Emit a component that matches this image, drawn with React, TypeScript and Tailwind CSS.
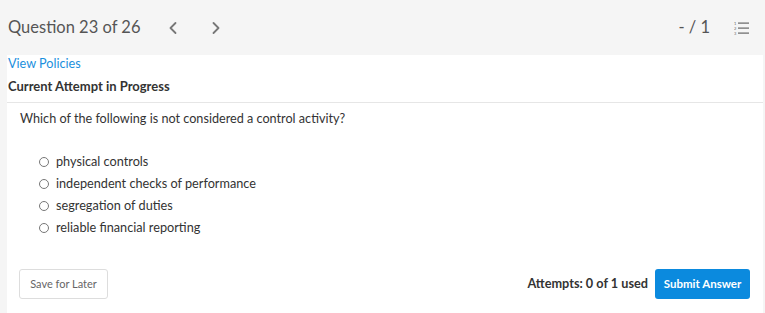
import { ChevronLeft, ChevronRight } from 'lucide-react'

const options = [
  'physical controls',
  'independent checks of performance',
  'segregation of duties',
  'reliable financial reporting',
]

const ListIcon = () => (
  <svg width="16" height="14" viewBox="0 0 16 14" className="text-[#666]">
    <text x="0" y="3.5" fontSize="4" fill="currentColor" fontFamily="Lato, sans-serif">1</text>
    <text x="0" y="8.5" fontSize="4" fill="currentColor" fontFamily="Lato, sans-serif">2</text>
    <text x="0" y="13.5" fontSize="4" fill="currentColor" fontFamily="Lato, sans-serif">3</text>
    <rect x="4" y="1.5" width="11" height="1.2" fill="currentColor" />
    <rect x="4" y="6.5" width="11" height="1.2" fill="currentColor" />
    <rect x="4" y="11.5" width="11" height="1.2" fill="currentColor" />
  </svg>
)

export default function App() {
  return (
    <div className="w-[765px] h-[313px] bg-[#f5f5f5] font-['Lato',sans-serif] overflow-hidden">
      {/* Header */}
      <div className="h-[55px] flex items-center pl-2 pr-[15px]">
        <span className="text-[16.5px] text-[#555]">Question 23 of 26</span>
        <ChevronLeft className="ml-[23px] w-5 h-5 text-[#777]" strokeWidth={2.2} />
        <ChevronRight className="ml-[23px] w-5 h-5 text-[#777]" strokeWidth={2.2} />
        <span className="ml-auto text-[16.5px] text-[#555]">- / 1</span>
        <span className="ml-[24px]">
          <ListIcon />
        </span>
      </div>

      {/* Panel */}
      <div className="ml-[7px] mr-[2px] h-[258px] bg-white flex flex-col">
        <div className="pl-[1px]">
          <div className="text-[12.65px] text-[#1b8fdd] leading-[18px]">View Policies</div>
          <div className="mt-[4px] text-[13px] font-bold text-[#333] leading-[18px]">
            Current Attempt in Progress
          </div>
        </div>
        <div className="mt-[7px] border-t border-[#e6e6e6]" />

        <p className="mt-[7px] pl-[13px] text-[12.65px] text-[#333] leading-[18px]">
          Which of the following is not considered a control activity?
        </p>

        <div className="mt-[23px] pl-[32px] flex flex-col">
          {options.map((o) => (
            <label key={o} className="h-[22px] flex items-center text-[12.7px] text-[#333]">
              <span className="w-[10px] h-[10px] rounded-full border border-[#777] mr-[7px]" />
              {o}
            </label>
          ))}
        </div>

        <div className="mt-auto mb-[14px] flex items-center pl-[12px] pr-[13px]">
          <button className="h-[30px] w-[89px] rounded-[3px] border border-[#ddd] text-[11px] text-[#666] bg-white">
            Save for Later
          </button>
          <span className="ml-auto mr-[7px] text-[12.7px] font-bold text-[#333]">Attempts: 0 of 1 used</span>
          <button className="h-[30px] w-[95px] rounded-[3px] bg-[#0b8ade] text-white text-[11.5px] font-bold">
            Submit Answer
          </button>
        </div>
      </div>
    </div>
  )
}
